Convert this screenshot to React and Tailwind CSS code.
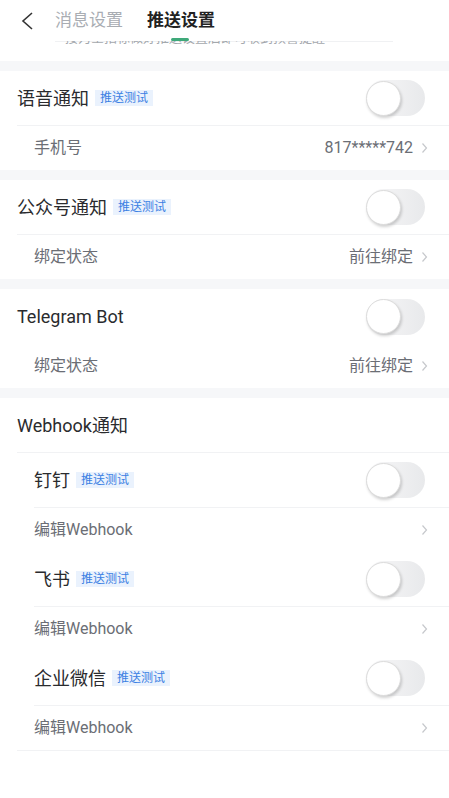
import React from 'react'

const font = { fontFamily: 'Roboto, "Noto Sans CJK SC", sans-serif' }

function Toggle() {
  return (
    <div className="flex h-[36px] w-[59px] items-center rounded-full bg-gradient-to-r from-[#f8f8f9] to-[#e8e9eb]">
      <div className="h-[35px] w-[35px] rounded-full border border-[#dcdcdc] bg-white shadow-[1px_2px_3px_rgba(0,0,0,0.18)]" />
    </div>
  )
}

function Chevron() {
  return (
    <svg width="7" height="12" viewBox="0 0 7 12" className="ml-[8px]">
      <polyline points="1.5,1.5 5.5,6 1.5,10.5" fill="none" stroke="#c6c8cc" strokeWidth="1.2" />
    </svg>
  )
}

function Badge() {
  return (
    <span className="ml-[6px] inline-flex h-[16px] items-center bg-[#eaf2fd] px-[5px] text-[12px] leading-none text-[#3b80e3]">
      推送测试
    </span>
  )
}

function ToggleRow({ title, badge = true, inset = 17, border = true }) {
  return (
    <div
      className={`flex h-[55px] items-center pr-[24px] ${border ? 'border-b border-[#f1f2f4]' : ''}`}
      style={{ marginLeft: inset }}
    >
      <span className="text-[18px] text-[#2a2b2e]">{title}</span>
      {badge && <Badge />}
      <div className="flex-1" />
      <Toggle />
    </div>
  )
}

function LinkRow({ label, value }) {
  return (
    <div className="flex h-[44px] items-center pl-[34px] pr-[21px]">
      <span className="text-[16px] text-[#6b6e75]">{label}</span>
      <div className="flex-1" />
      {value && <span className="text-[16px] text-[#6b6e75]">{value}</span>}
      <Chevron />
    </div>
  )
}

function Gap() {
  return <div className="h-[10px] bg-[#f6f7f9]" />
}

export default function App() {
  return (
    <div className="min-h-[798px] w-full bg-white" style={font}>
      <div className="flex h-[41px] items-center bg-white">
        <svg width="14" height="20" viewBox="0 0 14 20" className="ml-[20px]">
          <polyline points="12,2 3,10 12,18" fill="none" stroke="#333" strokeWidth="1.6" />
        </svg>
        <span className="ml-[21px] text-[17px] text-[#a9adb3]">消息设置</span>
        <div className="relative ml-[24px] flex h-full items-center">
          <span className="text-[17px] font-bold text-[#222]">推送设置</span>
          <div className="absolute bottom-[0px] left-[24px] h-[3px] w-[18px] rounded-full bg-[#3fa97a]" />
        </div>
      </div>

      <div className="h-[20px] overflow-hidden">
        <div className="ml-[55px] w-[338px] border-t border-[#f0f1f3]">
          <div className="-mt-[12px] pl-[10px] text-[13px] leading-[16px] text-[#a4a8ad]">
            接为空指标做好推送设置后即可收到预警提醒
          </div>
        </div>
      </div>

      <Gap />
      <ToggleRow title="语音通知" />
      <LinkRow label="手机号" value="817*****742" />
      <Gap />
      <ToggleRow title="公众号通知" />
      <LinkRow label="绑定状态" value="前往绑定" />
      <Gap />
      <ToggleRow title="Telegram Bot" badge={false} border={false} />
      <LinkRow label="绑定状态" value="前往绑定" />
      <Gap />

      <div className="ml-[17px] flex h-[55px] items-center border-b border-[#f1f2f4]">
        <span className="text-[18px] text-[#2a2b2e]">Webhook通知</span>
      </div>
      <ToggleRow title="钉钉" inset={34} />
      <LinkRow label="编辑Webhook" />
      <ToggleRow title="飞书" inset={34} />
      <LinkRow label="编辑Webhook" />
      <ToggleRow title="企业微信" inset={34} />
      <LinkRow label="编辑Webhook" />
      <div className="ml-[17px] border-b border-[#f1f2f4]" />
    </div>
  )
}
